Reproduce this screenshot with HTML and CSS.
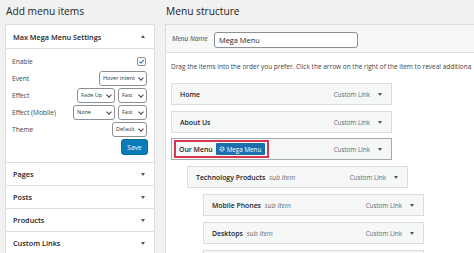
FILE: index.html
```html
<!DOCTYPE html>
<html>
<head>
<meta charset="utf-8">
<link rel="stylesheet" href="styles.css">
</head>
<body>
<div class="page">
  <div class="col-left">
    <h2 class="col-title">Add menu items</h2>
    <div class="acc">
      <div class="acc-head open">
        <span>Max Mega Menu Settings</span>
        <span class="caret up"></span>
      </div>
      <div class="settings">
        <div class="row"><span class="lbl">Enable</span><span class="check"><svg viewBox="0 0 10 10" width="9" height="9"><path d="M2 5.2 L4.2 7.3 L8.3 2.6" fill="none" stroke="#2271b1" stroke-width="1.5"/></svg></span></div>
        <div class="row"><span class="lbl">Event</span><span class="sel w48">Hover intent</span></div>
        <div class="row"><span class="lbl">Effect</span><span class="pair"><span class="sel w38">Fade Up</span><span class="sel w29">Fast</span></span></div>
        <div class="row"><span class="lbl">Effect (Mobile)</span><span class="pair"><span class="sel w42">None</span><span class="sel w29">Fast</span></span></div>
        <div class="row"><span class="lbl">Theme</span><span class="sel w35">Default</span></div>
        <div class="save-row"><span class="btn">Save</span></div>
      </div>
      <div class="acc-head"><span>Pages</span><span class="caret"></span></div>
      <div class="acc-head"><span>Posts</span><span class="caret"></span></div>
      <div class="acc-head"><span>Products</span><span class="caret"></span></div>
      <div class="acc-head"><span>Custom Links</span><span class="caret"></span></div>
    </div>
  </div>
  <div class="col-right">
    <h2 class="col-title">Menu structure</h2>
    <div class="menu-panel">
      <div class="menu-head">
        <span class="mn-label">Menu Name</span>
        <span class="mn-input">Mega Menu</span>
      </div>
      <div class="menu-body">
        <p class="drag">Drag the items into the order you prefer. Click the arrow on the right of the item to reveal additiona</p>
        <ul class="items">
          <li class="item d0"><span class="title">Home</span><span class="type">Custom Link</span><span class="caret"></span></li>
          <li class="item d0"><span class="title">About Us</span><span class="type">Custom Link</span><span class="caret"></span></li>
          <li class="item d0 active"><span class="title"><span class="hl">Our Menu <span class="badge"><svg viewBox="0 0 10 10" width="6" height="6"><circle cx="5" cy="5" r="3.3" fill="none" stroke="#fff" stroke-width="2.2" stroke-dasharray="1.6 1"/><circle cx="5" cy="5" r="1" fill="#fff"/></svg>Mega Menu</span></span></span><span class="type">Custom Link</span><span class="caret"></span></li>
          <li class="item d1"><span class="title">Technology Products <em>sub item</em></span><span class="type">Custom Link</span><span class="caret"></span></li>
          <li class="item d2"><span class="title">Mobile Phones <em>sub item</em></span><span class="type">Custom Link</span><span class="caret"></span></li>
          <li class="item d2"><span class="title">Desktops <em>sub item</em></span><span class="type">Custom Link</span><span class="caret"></span></li>
          <li class="item d2"></li>
        </ul>
      </div>
    </div>
  </div>
</div>
</body>
</html>
```
FILE: styles.css
```css
* { box-sizing: border-box; }
html, body { margin: 0; padding: 0; }
body {
  background: #f1f1f1;
  font-family: "Open Sans", "Noto Sans", sans-serif;
  color: #1d2327;
  width: 474px;
  height: 253px;
  overflow: hidden;
}
.page {
  display: flex;
  gap: 10px;
  padding: 0 0 0 5px;
}
.col-left { width: 150px; flex: none; }
.col-right { width: 309px; flex: none; overflow: hidden; }
.col-title {
  margin: 0;
  height: 24px;
  line-height: 22px;
  font-size: 10.2px;
  font-weight: 400;
  padding-left: 1px;
  color: #1d2327;
}
.acc {
  background: #fff;
  border: 1px solid #dcdcde;
  border-bottom: 0;
}
.acc-head {
  display: flex;
  align-items: center;
  justify-content: space-between;
  height: 23px;
  padding: 0 9px 0 7px;
  font-size: 7.3px;
  font-weight: 600;
  border-top: 1px solid #dcdcde;
  color: #1d2327;
}
.acc-head:first-child { border-top: 0; }
.acc-head.open { height: 24px; border-bottom: 1px solid #dcdcde; }
.caret {
  width: 0; height: 0;
  border-left: 2.5px solid transparent;
  border-right: 2.5px solid transparent;
  border-top: 3px solid #50575e;
}
.caret.up { border-top: 0; border-bottom: 3px solid #50575e; }
.settings {
  padding: 4px 7px 7px 6px;
  display: flex;
  flex-direction: column;
  gap: 1px;
}
.row {
  display: flex;
  align-items: center;
  justify-content: space-between;
  height: 16px;
  font-size: 6.6px;
  color: #3c434a;
}
.check {
  width: 9px; height: 9px;
  border: 1px solid #8c8f94;
  border-radius: 2px;
  display: flex;
  align-items: center;
  justify-content: center;
  margin-right: 1px;
}
.check svg { display: block; }
.pair { display: flex; gap: 3px; }
.sel {
  height: 15px;
  border: 1px solid #8c8f94;
  border-radius: 3px;
  background: #fff;
  font-size: 5.5px;
  color: #2c3338;
  display: flex;
  align-items: center;
  padding: 0 9px 0 3px;
  position: relative;
  white-space: nowrap;
  overflow: hidden;
}
.sel::after {
  content: "";
  position: absolute;
  right: 3.5px; top: 4.5px;
  width: 3px; height: 3px;
  border-right: 1px solid #3c434a;
  border-bottom: 1px solid #3c434a;
  transform: rotate(45deg);
  background: #fff;
}
.w48 { width: 48px; }
.w38 { width: 38px; }
.w29 { width: 29px; }
.w42 { width: 42px; }
.w35 { width: 35px; }
.save-row { display: flex; justify-content: flex-end; margin-top: 1px; }
.btn {
  width: 27px; height: 16px;
  background: #0a7cb8;
  border: 1px solid #0a6aa0;
  border-radius: 3px;
  color: #fff;
  font-size: 6.6px;
  display: flex;
  align-items: center;
  justify-content: center;
  margin-right: -1px;
}
.menu-panel {
  border: 1px solid #dcdcde;
  border-right: 0;
  background: #fff;
}
.menu-head {
  height: 28px;
  background: #f6f7f7;
  border-bottom: 1px solid #dcdcde;
  display: flex;
  align-items: center;
  padding: 0 0 0 6px;
  gap: 6px;
}
.mn-label { font-style: italic; font-size: 6.6px; color: #3c434a; width: 36px; }
.mn-input {
  width: 144px; height: 16px;
  border: 1px solid #8c8f94;
  border-radius: 3px;
  background: #fff;
  font-size: 7.4px;
  display: flex;
  align-items: center;
  padding-left: 4px;
  margin-top: 2px;
}
.menu-body { padding: 0 0 0 5px; }
.drag {
  margin: 0;
  height: 30px;
  line-height: 27px;
  font-size: 6.5px;
  white-space: nowrap;
  color: #3c434a;
}
.items { list-style: none; margin: 0; padding: 0; display: flex; flex-direction: column; gap: 6px; }
.item {
  width: 221px;
  height: 22px;
  border: 1px solid #dcdcde;
  background: #f6f7f7;
  display: flex;
  align-items: center;
  padding: 0 9px 0 8px;
  font-size: 6.9px;
}
.item .title { flex: 1; font-weight: 600; color: #1d2327; white-space: nowrap; }
.item em { font-weight: 400; color: #646970; margin-left: 2px; }
.item .type { font-size: 6.3px; color: #646970; margin-right: 8px; }
.d1 { margin-left: 16px; }
.d2 { margin-left: 32px; }
.item.active { border-color: #a7aaad; margin-top: -1px; }
.hl {
  display: inline-flex;
  align-items: center;
  gap: 3px;
  border: 1px solid #d63650;
  outline: 0.5px solid #d63650;
  padding: 1px 2px 1px 3px;
  margin-left: -5px;
}
.badge {
  display: inline-flex;
  align-items: center;
  gap: 2px;
  background: #1a6fae;
  color: #fff;
  font-weight: 400;
  font-size: 6.3px;
  height: 12px;
  padding: 0 4px 0 3px;
  border-radius: 1px;
}
```
